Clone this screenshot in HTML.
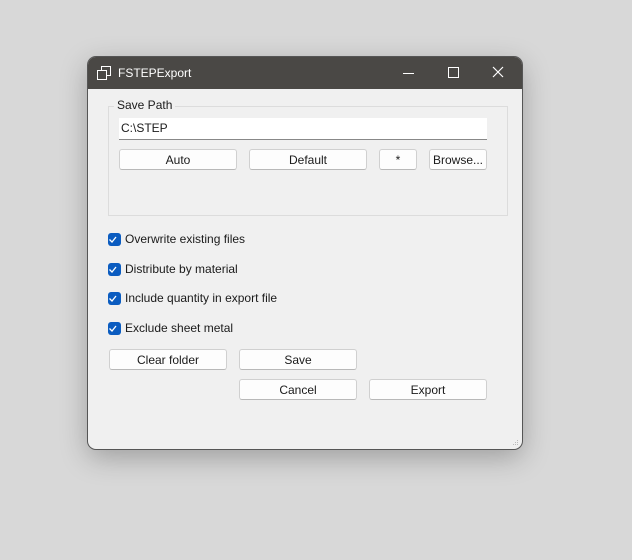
<!DOCTYPE html>
<html><head><style>
body{margin:0;width:632px;height:560px;background:#d8d8d8;font-family:"Liberation Sans",sans-serif;font-size:12px;color:#1a1a1a;position:relative;overflow:hidden}
.win{position:absolute;left:88px;top:57px;width:434px;height:392px;background:#f0f0f0;border-radius:8px;overflow:hidden;box-shadow:0 0 0 1px #555,0 8px 28px rgba(0,0,0,.28)}
.tb{position:absolute;left:0;top:0;right:0;height:32px;background:#4a4845;color:#fff}
.a{position:absolute}
.btn{position:absolute;height:21px;background:#fdfdfd;border:1px solid #d0d0d0;border-bottom-color:#b8b8b8;border-radius:3px;text-align:center;line-height:20px;box-sizing:border-box}
.cb{position:absolute;left:20px;width:13px;height:13px;background:#0b5cc0;border-radius:3px}
.lbl{position:absolute;left:37px}
</style></head><body>
<div class="win">
<div class="tb">
<svg class="a" style="left:8px;top:8px" width="16" height="16" viewBox="0 0 16 16"><rect x="5.5" y="1.5" width="9" height="9" fill="none" stroke="#fff"/><rect x="1.5" y="5.5" width="9" height="9" fill="#4a4845" stroke="#fff"/></svg>
<div class="a" style="left:30px;top:9px;font-size:12px">FSTEPExport</div>
<div class="a" style="left:315px;top:16px;width:11px;height:1px;background:#fff"></div>
<div class="a" style="left:360px;top:10px;width:9px;height:9px;border:1px solid #fff"></div>
<svg class="a" style="left:404px;top:9px" width="12" height="12"><path d="M1 1L11 11M11 1L1 11" stroke="#fff" stroke-width="1.2"/></svg>
</div>
<div class="a" style="left:20px;top:49px;width:400px;height:110px;border:1px solid #dcdcdc;box-sizing:border-box"></div>
<div class="a" style="left:26px;top:41px;background:#f0f0f0;padding:0 3px">Save Path</div>
<div class="a" style="left:31px;top:61px;width:368px;height:22px;background:#fff;border-bottom:1px solid #888;box-sizing:border-box;padding-left:2px;line-height:21px">C:\STEP</div>
<div class="btn" style="left:31px;top:92px;width:118px">Auto</div>
<div class="btn" style="left:161px;top:92px;width:118px">Default</div>
<div class="btn" style="left:291px;top:92px;width:38px">*</div>
<div class="btn" style="left:341px;top:92px;width:58px">Browse...</div>
<div class="cb" style="top:176px"></div><div class="lbl" style="top:175px">Overwrite existing files</div>
<div class="cb" style="top:206px"></div><div class="lbl" style="top:205px">Distribute by material</div>
<div class="cb" style="top:235px"></div><div class="lbl" style="top:234px">Include quantity in export file</div>
<div class="cb" style="top:265px"></div><div class="lbl" style="top:264px">Exclude sheet metal</div>
<div class="btn" style="left:21px;top:292px;width:118px">Clear folder</div>
<div class="btn" style="left:151px;top:292px;width:118px">Save</div>
<div class="btn" style="left:151px;top:322px;width:118px">Cancel</div>
<div class="btn" style="left:281px;top:322px;width:118px">Export</div>
<svg class="a" style="left:424px;top:382px" width="8" height="8"><g fill="#bbb"><rect x="5" y="1" width="1" height="1"/><rect x="3" y="3" width="1" height="1"/><rect x="5" y="3" width="1" height="1"/><rect x="1" y="5" width="1" height="1"/><rect x="3" y="5" width="1" height="1"/><rect x="5" y="5" width="1" height="1"/></g></svg>
</div>
<svg style="position:absolute;left:0;top:0" width="632" height="560">
<g fill="none" stroke="#fff" stroke-width="1.3">
<path d="M109.5 239.5l2.5 2.5 4-5"/><path d="M109.5 269.5l2.5 2.5 4-5"/><path d="M109.5 298.5l2.5 2.5 4-5"/><path d="M109.5 328.5l2.5 2.5 4-5"/>
</g></svg>
</body></html>
